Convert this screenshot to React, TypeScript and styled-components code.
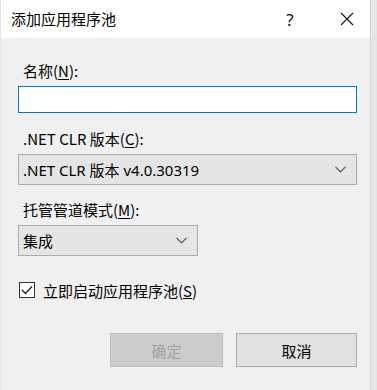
import React from "react";
import styled, { createGlobalStyle } from "styled-components";

const GlobalStyle = createGlobalStyle`
    html, body {
        margin:0;
        padding:0;
        background:#e6e6e6;
    }
    body {
        font-family:"Noto Sans", "Noto Sans CJK SC", sans-serif;
        font-size:15px;
        color:#000;
    }
`;

const Dialog = styled.div`
    margin-left:1px;
    width:370px;
    height:390px;
    background:#f0f0f0;
    display:flex;
    flex-direction:column;
    border-right:1px solid #d4d4d4;
    box-sizing:border-box;
`;

const TitleBar = styled.div`
    height:38px;
    background:#fff;
    display:flex;
    align-items:center;
    padding-left:10px;
`;

const Title = styled.div`
    flex:1;
    font-size:15px;
    font-family:"Noto Sans CJK SC", sans-serif;
    margin-top:-2px;
`;

const TitleButton = styled.div<{ $width: number }>`
    width:${p => p.$width}px;
    height:38px;
    display:flex;
    align-items:center;
    justify-content:center;
    color:#111;
    font-size:17px;
`;

const Body = styled.div`
    padding:23px 14px 0 17px;
    display:flex;
    flex-direction:column;
`;

const Label = styled.div`
    font-family:"Noto Sans CJK SC", sans-serif;
    font-size:15px;
    line-height:20px;
    margin-left:5px;
    margin-bottom:5px;
    u{
        text-underline-offset:2px;
    }
`;

const TextInput = styled.input`
    box-sizing:border-box;
    width:339px;
    height:27px;
    border:1px solid #0078d7;
    background:#fff;
    outline:none;
    margin:0 0 16px;
`;

const Select = styled.div<{ $width: number }>`
    box-sizing:border-box;
    width:${p => p.$width}px;
    height:31px;
    border:1px solid #acacac;
    background:#e5e5e5;
    display:flex;
    align-items:center;
    padding:0 10px 0 4px;
    margin-bottom:15px;
    font-size:15px;
    span{
        flex:1;
        font-family:"Noto Sans", "Noto Sans CJK SC", sans-serif;
    }
`;

const Chevron = () => (
    <svg width="11" height="7" viewBox="0 0 11 7">
        <path d="M0.5 0.8 L5.5 5.8 L10.5 0.8" fill="none" stroke="#555" strokeWidth="1.2" />
    </svg>
);

const CheckRow = styled.label`
    display:flex;
    align-items:center;
    height:16px;
    margin-top:11px;
    font-family:"Noto Sans CJK SC", sans-serif;
    font-size:15px;
`;

const CheckBox = styled.div`
    box-sizing:border-box;
    width:16px;
    height:16px;
    border:1px solid #333;
    background:#fff;
    display:flex;
    align-items:center;
    justify-content:center;
    margin:0 8px 0 1px;
`;

const Footer = styled.div`
    display:flex;
    justify-content:flex-end;
    gap:13px;
    padding:35px 13px 0 0;
`;

const Button = styled.div<{ $disabled?: boolean; $width: number }>`
    box-sizing:border-box;
    width:${p => p.$width}px;
    height:34px;
    display:flex;
    align-items:center;
    justify-content:center;
    font-family:"Noto Sans CJK SC", sans-serif;
    font-size:15px;
    border:1px solid ${p => (p.$disabled ? "#bfbfbf" : "#adadad")};
    background:${p => (p.$disabled ? "#cccccc" : "#e1e1e1")};
    color:${p => (p.$disabled ? "#a0a0a0" : "#000")};
`;

export default function App() {
    return (
        <>
            <GlobalStyle />
            <Dialog>
                <TitleBar>
                    <Title>添加应用程序池</Title>
                    <TitleButton $width={68}>?</TitleButton>
                    <TitleButton $width={46}>
                        <svg width="14" height="14" viewBox="0 0 14 14">
                            <path d="M1 1 L13 13 M13 1 L1 13" stroke="#111" strokeWidth="1.1" />
                        </svg>
                    </TitleButton>
                </TitleBar>
                <Body>
                    <Label>名称(<u>N</u>):</Label>
                    <TextInput />
                    <Label>.NET CLR 版本(<u>C</u>):</Label>
                    <Select $width={339}>
                        <span>.NET CLR 版本 v4.0.30319</span>
                        <Chevron />
                    </Select>
                    <Label>托管管道模式(<u>M</u>):</Label>
                    <Select $width={180}>
                        <span>集成</span>
                        <Chevron />
                    </Select>
                    <CheckRow>
                        <CheckBox>
                            <svg width="12" height="10" viewBox="0 0 12 10">
                                <path d="M1 5 L4.5 8.5 L11 1.5" fill="none" stroke="#222" strokeWidth="1.3" />
                            </svg>
                        </CheckBox>
                        立即启动应用程序池(<u>S</u>)
                    </CheckRow>
                </Body>
                <Footer>
                    <Button $disabled $width={113}>确定</Button>
                    <Button $width={121}>取消</Button>
                </Footer>
            </Dialog>
        </>
    );
}
